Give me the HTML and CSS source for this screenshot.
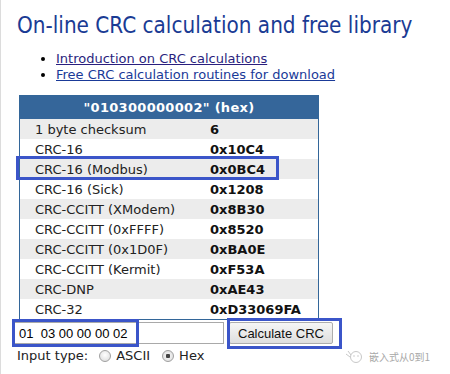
FILE: index.html
```html
<!DOCTYPE html>
<html>
<head>
<meta charset="utf-8">
<link rel="stylesheet" href="styles.css">
</head>
<body>
<div class="page">
  <h1 class="title">On-line CRC calculation and free library</h1>
  <ul class="links">
    <li><a class="visited" href="#">Introduction on CRC calculations</a></li>
    <li><a href="#">Free CRC calculation routines for download</a></li>
  </ul>
  <table class="crc">
    <thead>
      <tr><th colspan="2">"010300000002" (hex)</th></tr>
    </thead>
    <tbody>
      <tr><td class="name">1 byte checksum</td><td class="val">6</td></tr>
      <tr><td class="name">CRC-16</td><td class="val">0x10C4</td></tr>
      <tr><td class="name">CRC-16 (Modbus)</td><td class="val">0x0BC4</td></tr>
      <tr><td class="name">CRC-16 (Sick)</td><td class="val">0x1208</td></tr>
      <tr><td class="name">CRC-CCITT (XModem)</td><td class="val">0x8B30</td></tr>
      <tr><td class="name">CRC-CCITT (0xFFFF)</td><td class="val">0x8520</td></tr>
      <tr><td class="name">CRC-CCITT (0x1D0F)</td><td class="val">0xBA0E</td></tr>
      <tr><td class="name">CRC-CCITT (Kermit)</td><td class="val">0xF53A</td></tr>
      <tr><td class="name">CRC-DNP</td><td class="val">0xAE43</td></tr>
      <tr><td class="name">CRC-32</td><td class="val">0xD33069FA</td></tr>
    </tbody>
  </table>
  <div class="form-row">
    <input class="data" type="text" value="01  03 00 00 00 02">
    <button class="calc">Calculate CRC</button>
  </div>
  <div class="type-row">
    <span class="label">Input type:</span>
    <span class="radio"></span><span>ASCII</span>
    <span class="radio checked"></span><span>Hex</span>
  </div>

  <div class="mark mark-modbus"></div>
  <div class="mark mark-input"></div>
  <div class="mark mark-button"></div>

  <div class="watermark">
    <svg width="18" height="16" viewBox="0 0 18 16">
      <path d="M3 3 L6 7 M1 6 L5 9" stroke="#c8c8c8" stroke-width="1" fill="none"/>
      <circle cx="11" cy="9" r="5.5" stroke="#c8c8c8" stroke-width="1" fill="none"/>
      <circle cx="9" cy="8" r="0.8" fill="#c8c8c8"/>
      <circle cx="13" cy="8" r="0.8" fill="#c8c8c8"/>
    </svg>
    <span>嵌入式从0到1</span>
  </div>
</div>
</body>
</html>
```
FILE: styles.css
```css
html, body {
  margin: 0;
  padding: 0;
  background: #fff;
}
.page {
  position: relative;
  width: 450px;
  height: 374px;
  box-sizing: border-box;
  border-left: 1px solid #dcdcdc;
  font-family: "DejaVu Sans", Verdana, sans-serif;
  overflow: hidden;
}
.title {
  margin: 0;
  padding: 12px 0 0 16px;
  font-family: "DejaVu Sans Condensed", "DejaVu Sans", sans-serif;
  font-stretch: semi-condensed;
  font-size: 22.3px;
  font-weight: normal;
  line-height: 26px;
  white-space: nowrap;
  color: #1a3b94;
}
.links {
  margin: 13px 0 0 0;
  padding: 0 0 0 55px;
  font-size: 13px;
  line-height: 16px;
}
.links a {
  color: #1a3a98;
}
.links a.visited {
  color: #2a1f7e;
}
.crc {
  margin: 12px 0 0 18px;
  width: 300px;
  border-collapse: collapse;
  border: 1px solid #336699;
  font-size: 13px;
}
.crc th {
  background: #35669a;
  color: #fff;
  font-weight: bold;
  height: 23px;
  padding: 0;
  text-align: center;
  letter-spacing: 0.3px;
}
.crc td {
  height: 20px;
  padding: 0;
  color: #222;
}
.crc tbody tr:nth-child(odd) td {
  background: #ececec;
}
.crc td.name {
  padding-left: 15px;
  width: 175px;
}
.crc td.val {
  font-weight: bold;
  color: #111;
}
.form-row {
  display: flex;
  align-items: center;
  gap: 5px;
  margin: 2px 0 0 12px;
}
.data {
  width: 211px;
  height: 22px;
  box-sizing: border-box;
  border: 1px solid #a9a9a9;
  padding: 0 0 0 5px;
  font-family: "Liberation Sans", Arial, sans-serif;
  font-size: 13px;
  color: #000;
  margin: 0;
}
.calc {
  width: 104px;
  height: 22px;
  box-sizing: border-box;
  border: 1px solid #adadad;
  border-radius: 2px;
  background: linear-gradient(#f6f6f6, #dedede);
  font-family: "Liberation Sans", Arial, sans-serif;
  font-size: 13px;
  color: #111;
  padding: 0;
  margin: 0;
}
.type-row {
  display: flex;
  align-items: center;
  margin: 4px 0 0 16px;
  font-size: 13px;
  color: #222;
}
.type-row .label {
  margin-right: 6px;
}
.radio {
  width: 12px;
  height: 12px;
  box-sizing: border-box;
  border: 1px solid #a0a0a0;
  border-radius: 50%;
  background: radial-gradient(circle at 50% 40%, #fff, #d8d8d8);
  margin: 0 5px 0 5px;
}
.radio.checked {
  background: radial-gradient(circle, #444 0 2px, #eee 2.5px, #d8d8d8);
  margin-left: 12px;
}
.mark {
  position: absolute;
  border: 3px solid #3b55c9;
  box-sizing: border-box;
}
.mark-modbus {
  left: 15px;
  top: 156px;
  width: 263px;
  height: 24px;
}
.mark-input {
  left: 11px;
  top: 319px;
  width: 127px;
  height: 28px;
}
.mark-button {
  left: 226px;
  top: 318px;
  width: 115px;
  height: 31px;
}
.watermark {
  position: absolute;
  left: 344px;
  top: 348px;
  display: flex;
  align-items: center;
  gap: 6px;
  font-family: "Noto Sans CJK SC", sans-serif;
  font-size: 10px;
  color: #a8a8a8;
}
```
